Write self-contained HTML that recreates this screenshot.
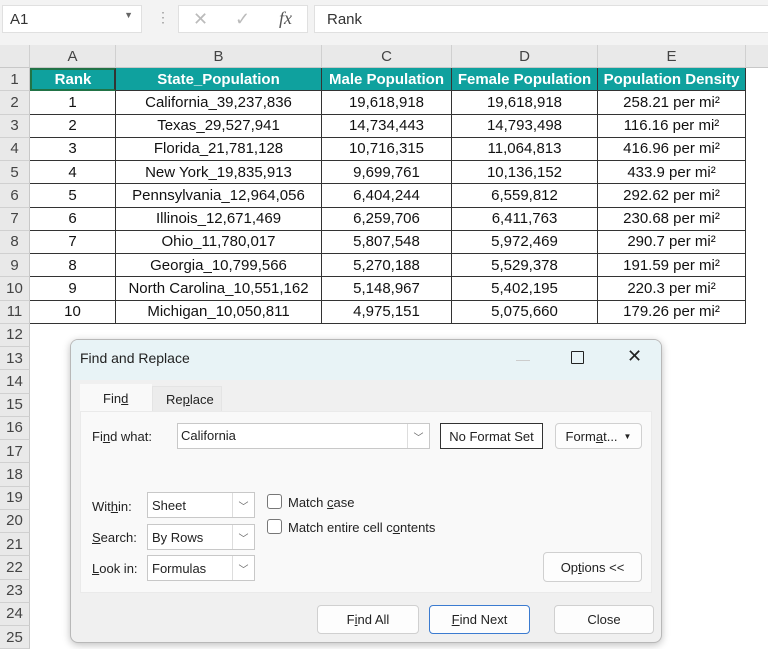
<!DOCTYPE html>
<html><head><meta charset="utf-8"><style>
*{box-sizing:border-box;margin:0;padding:0}
body{width:768px;height:648px;overflow:hidden;background:#fff;font-family:"Liberation Sans",sans-serif;position:relative}
.top{position:absolute;left:0;top:0;width:768px;height:45px;background:#f3f3f3}
.box{position:absolute;background:#fff;border:1px solid #e0e0e0;font-size:15px;color:#333}
.grid{position:absolute;left:0;top:45px;display:grid;grid-template-columns:30px 86px 206px 130px 146px 148px 22px;grid-template-rows:23px repeat(25,23.25px)}
.grid div{display:flex;align-items:center;justify-content:center;font-size:15px;color:#111;white-space:nowrap;overflow:hidden}
.ch{background:#e9e9e9;color:#444!important;border-right:1px solid #d0d0d0;border-bottom:1px solid #c8c8c8}
.rh{background:#e9e9e9;color:#444!important;border-bottom:1px solid #d0d0d0;border-right:1px solid #c8c8c8}
.h{background:#0fa19e;color:#fff!important;font-weight:bold;border-right:1px solid #333;border-bottom:1px solid #333}
.c{border-right:1px solid #333;border-bottom:1px solid #333}
.dlg{position:absolute;left:70px;top:339px;width:592px;height:304px;background:#f0f0f0;border:1px solid #b8b8b8;border-radius:8px;box-shadow:0 2px 8px rgba(0,0,0,.25);overflow:hidden;font-size:13px;color:#222}
.dlg .t{position:absolute;left:0;top:0;width:100%;height:40px;background:#e8f3f6}
.a{position:absolute}
.inp{position:absolute;background:#fff;border:1px solid #c8c8c8}
.dd{position:absolute;right:0;top:0;bottom:0;width:22px;border-left:1px solid #ddd;display:flex;align-items:center;justify-content:center;color:#666;font-size:10px}
.btn{position:absolute;background:#fdfdfd;border:1px solid #d0d0d0;border-radius:4px;display:flex;align-items:center;justify-content:center;font-size:13px}
.cb{position:absolute;width:15px;height:15px;border:1px solid #777;border-radius:3px;background:#fff}
</style></head><body>
<div class="top"></div>
<div class="box" style="left:2px;top:5px;width:140px;height:28px;padding:5px 7px">A1<span style="position:absolute;right:8px;top:4px;font-size:9px;color:#666">▼</span></div>
<div class="a" style="left:156px;top:9px;color:#999;font-size:14px">⋮</div>
<div class="box" style="left:178px;top:5px;width:130px;height:28px;color:#bbb;font-size:18px"><span style="position:absolute;left:14px;top:3px">✕</span><span style="position:absolute;left:56px;top:3px">✓</span><span style="position:absolute;left:100px;top:2px;color:#555;font-family:'Liberation Serif',serif;font-style:italic">fx</span></div>
<div class="box" style="left:314px;top:5px;width:460px;height:28px;padding:5px 12px">Rank</div>
<div class="grid">
<div class="ch"></div><div class="ch">A</div><div class="ch">B</div><div class="ch">C</div><div class="ch">D</div><div class="ch">E</div><div class="ch" style="border-right:0"></div>
<div class="rh">1</div><div class="h" style="border:2px solid #217346;border-right-color:#333">Rank</div><div class="h">State_Population</div><div class="h">Male Population</div><div class="h">Female Population</div><div class="h">Population Density</div><div></div>
<div class="rh">2</div><div class="c">1</div><div class="c">California_39,237,836</div><div class="c">19,618,918</div><div class="c">19,618,918</div><div class="c">258.21 per mi²</div><div></div>
<div class="rh">3</div><div class="c">2</div><div class="c">Texas_29,527,941</div><div class="c">14,734,443</div><div class="c">14,793,498</div><div class="c">116.16 per mi²</div><div></div>
<div class="rh">4</div><div class="c">3</div><div class="c">Florida_21,781,128</div><div class="c">10,716,315</div><div class="c">11,064,813</div><div class="c">416.96 per mi²</div><div></div>
<div class="rh">5</div><div class="c">4</div><div class="c">New York_19,835,913</div><div class="c">9,699,761</div><div class="c">10,136,152</div><div class="c">433.9 per mi²</div><div></div>
<div class="rh">6</div><div class="c">5</div><div class="c">Pennsylvania_12,964,056</div><div class="c">6,404,244</div><div class="c">6,559,812</div><div class="c">292.62 per mi²</div><div></div>
<div class="rh">7</div><div class="c">6</div><div class="c">Illinois_12,671,469</div><div class="c">6,259,706</div><div class="c">6,411,763</div><div class="c">230.68 per mi²</div><div></div>
<div class="rh">8</div><div class="c">7</div><div class="c">Ohio_11,780,017</div><div class="c">5,807,548</div><div class="c">5,972,469</div><div class="c">290.7 per mi²</div><div></div>
<div class="rh">9</div><div class="c">8</div><div class="c">Georgia_10,799,566</div><div class="c">5,270,188</div><div class="c">5,529,378</div><div class="c">191.59 per mi²</div><div></div>
<div class="rh">10</div><div class="c">9</div><div class="c">North Carolina_10,551,162</div><div class="c">5,148,967</div><div class="c">5,402,195</div><div class="c">220.3 per mi²</div><div></div>
<div class="rh">11</div><div class="c">10</div><div class="c">Michigan_10,050,811</div><div class="c">4,975,151</div><div class="c">5,075,660</div><div class="c">179.26 per mi²</div><div></div>
<div class="rh">12</div><div></div><div></div><div></div><div></div><div></div><div></div>
<div class="rh">13</div><div></div><div></div><div></div><div></div><div></div><div></div>
<div class="rh">14</div><div></div><div></div><div></div><div></div><div></div><div></div>
<div class="rh">15</div><div></div><div></div><div></div><div></div><div></div><div></div>
<div class="rh">16</div><div></div><div></div><div></div><div></div><div></div><div></div>
<div class="rh">17</div><div></div><div></div><div></div><div></div><div></div><div></div>
<div class="rh">18</div><div></div><div></div><div></div><div></div><div></div><div></div>
<div class="rh">19</div><div></div><div></div><div></div><div></div><div></div><div></div>
<div class="rh">20</div><div></div><div></div><div></div><div></div><div></div><div></div>
<div class="rh">21</div><div></div><div></div><div></div><div></div><div></div><div></div>
<div class="rh">22</div><div></div><div></div><div></div><div></div><div></div><div></div>
<div class="rh">23</div><div></div><div></div><div></div><div></div><div></div><div></div>
<div class="rh">24</div><div></div><div></div><div></div><div></div><div></div><div></div>
<div class="rh">25</div><div></div><div></div><div></div><div></div><div></div><div></div>
</div>
<div class="dlg">
<div class="t"></div>
<div class="a" style="left:9px;top:10px;font-size:14px">Find and Replace</div>
<div class="a" style="left:445px;top:20px;width:14px;border-top:1px solid #ccc"></div>
<div class="a" style="left:500px;top:11px;width:13px;height:13px;border:1.5px solid #222;border-radius:1px"></div>
<div class="a" style="left:556px;top:6px;font-size:18px">✕</div>
<div class="a" style="left:9px;top:44px;width:72px;height:28px;background:#f9f9f9"></div>
<div class="a" style="left:32px;top:51px">Fin<u>d</u></div>
<div class="a" style="left:81px;top:46px;width:70px;height:26px;background:#ececec;border:1px solid #e4e4e4"></div>
<div class="a" style="left:95px;top:52px">Re<u>p</u>lace</div>
<div class="a" style="left:9px;top:71px;width:572px;height:182px;background:#f9f9f9;border:1px solid #eaeaea"></div>
<div class="a" style="left:21px;top:89px">Fi<u>n</u>d what:</div>
<div class="inp" style="left:106px;top:83px;width:253px;height:26px;padding:4px 3px">California<div class="dd">﹀</div></div>
<div class="a" style="left:369px;top:83px;width:103px;height:26px;border:1px solid #333;background:#fff;display:flex;align-items:center;justify-content:center">No Format Set</div>
<div class="btn" style="left:484px;top:83px;width:87px;height:26px">Form<u>a</u>t... <span style="font-size:8px;margin-left:6px">▼</span></div>
<div class="a" style="left:21px;top:159px">Wit<u>h</u>in:</div>
<div class="a" style="left:21px;top:190px"><u>S</u>earch:</div>
<div class="a" style="left:21px;top:221px"><u>L</u>ook in:</div>
<div class="inp" style="left:76px;top:152px;width:108px;height:26px;padding:5px 4px">Sheet<div class="dd">﹀</div></div>
<div class="inp" style="left:76px;top:184px;width:108px;height:26px;padding:5px 4px">By Rows<div class="dd">﹀</div></div>
<div class="inp" style="left:76px;top:215px;width:108px;height:26px;padding:5px 4px">Formulas<div class="dd">﹀</div></div>
<div class="cb" style="left:196px;top:154px"></div><div class="a" style="left:217px;top:155px">Match <u>c</u>ase</div>
<div class="cb" style="left:196px;top:179px"></div><div class="a" style="left:217px;top:180px">Match entire cell c<u>o</u>ntents</div>
<div class="btn" style="left:472px;top:212px;width:99px;height:30px">Op<u>t</u>ions &lt;&lt;</div>
<div class="btn" style="left:246px;top:265px;width:102px;height:29px">F<u>i</u>nd All</div>
<div class="btn" style="left:358px;top:265px;width:101px;height:29px;border-color:#3b7bd0"><u>F</u>ind Next</div>
<div class="btn" style="left:483px;top:265px;width:100px;height:29px">Close</div>
</div>
</body></html>
